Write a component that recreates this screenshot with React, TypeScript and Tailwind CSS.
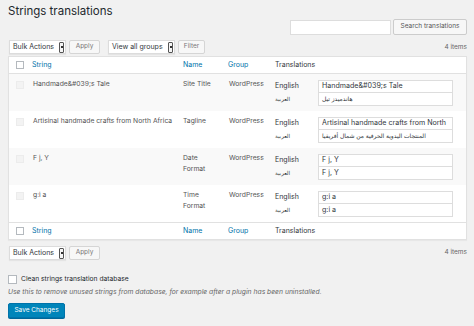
import React from "react";

const font = { fontFamily: 'Inter, "Noto Sans", "DejaVu Sans", sans-serif' };

function SelectBox({ label, width }: { label: string; width: string }) {
  return (
    <div className={`flex items-center h-[14px] bg-white border border-[#dcdcdc] ${width} pl-[3px] pr-[1px] text-[7px] text-[#32373c] shadow-[0_1px_1px_rgba(0,0,0,0.05)]`}>
      <span className="flex-1 whitespace-nowrap">{label}</span>
      <span className="w-[5px] h-[11px] border border-[#555] rounded-[1px] bg-[#f4f4f4] flex items-center justify-center">
        <span className="w-[2px] h-[2px] bg-[#333]" />
      </span>
    </div>
  );
}

function Btn({ label, width }: { label: string; width: string }) {
  return (
    <div className={`h-[14px] ${width} flex items-center justify-center bg-[#f7f7f7] border border-[#d5d5d5] rounded-[2px] text-[6.5px] text-[#777]`}>
      {label}
    </div>
  );
}

function Cb({ faint }: { faint?: boolean }) {
  return (
    <span
      className={`block w-[8px] h-[8px] ${faint ? "bg-[#f3f3f3] border border-[#ececec]" : "bg-white border border-[#b4b9be]"}`}
    />
  );
}

type Row = { s: string; name: string[]; en: string; ar: string; arRtl: boolean; bg: string };

const rows: Row[] = [
  { s: "Handmade&#039;s Tale", name: ["Site Title"], en: "Handmade&#039;s Tale", ar: "هاندميدز تيل", arRtl: true, bg: "bg-[#f9f9f9]" },
  { s: "Artisinal handmade crafts from North Africa", name: ["Tagline"], en: "Artisinal handmade crafts from North", ar: "المنتجات اليدوية الحرفية من شمال أفريقيا", arRtl: true, bg: "bg-white" },
  { s: "F j, Y", name: ["Date", "Format"], en: "F j, Y", ar: "F j, Y", arRtl: false, bg: "bg-[#f9f9f9]" },
  { s: "g:i a", name: ["Time", "Format"], en: "g:i a", ar: "g:i a", arRtl: false, bg: "bg-white" },
];

function HeaderRow({ top }: { top?: boolean }) {
  return (
    <div className={`flex h-[17px] items-center bg-white ${top ? "border-b" : "border-t"} border-[#e1e1e1] text-[7px]`}>
      <div className="w-[20px] flex justify-center pl-[1px]">
        <Cb />
      </div>
      <div className="w-[150px] pl-[3px] text-[#0073aa]">String</div>
      <div className="w-[46px] pl-[4px] text-[#0073aa]">Name</div>
      <div className="w-[46px] pl-[3px] text-[#0073aa]">Group</div>
      <div className="flex-1 pl-[4px] text-[#32373c]">Translations</div>
    </div>
  );
}

export default function App() {
  return (
    <div style={font} className="w-[474px] h-[326px] bg-[#f1f1f1] overflow-hidden text-[#555]">
      <div className="pl-[8px] pr-[7px]">
        <div className="h-[19px] pt-[3px] text-[11.5px] leading-[16px] text-[#23282d]">Strings translations</div>
        <div className="flex justify-end items-center gap-[2px] h-[16px]">
          <div className="w-[101px] h-[15px] bg-white border border-[#ddd]" />
          <div className="w-[74px] h-[16px] flex items-center justify-center bg-[#f7f7f7] border border-[#ccc] rounded-[2px] text-[6.5px] text-[#555]">
            Search translations
          </div>
        </div>
        <div className="flex items-center h-[18px] mt-[3px]">
          <div className="flex items-center gap-[3px] pl-[1px]">
            <SelectBox label="Bulk Actions" width="w-[57px]" />
            <Btn label="Apply" width="w-[31px]" />
          </div>
          <div className="flex items-center gap-[3px] ml-[8px]">
            <SelectBox label="View all groups" width="w-[67px]" />
            <Btn label="Filter" width="w-[27px]" />
          </div>
          <div className="flex-1 text-right text-[6.5px] text-[#666] self-start mt-[5px]">4 items</div>
        </div>

        <div className="border border-[#e1e1e1] bg-white shadow-[0_1px_1px_rgba(0,0,0,0.04)]">
          <HeaderRow top />
          {rows.map((r, i) => (
            <div key={i} className={`flex h-[37px] ${r.bg} text-[6.75px] leading-[10.5px] text-[#555]`}>
              <div className="w-[20px] flex justify-center pt-[7px] pl-[1px]">
                <Cb faint />
              </div>
              <div className="w-[150px] pl-[4px] pt-[5px] whitespace-nowrap text-[#555]">{r.s}</div>
              <div className="w-[46px] pl-[4px] pt-[5px]">
                {r.name.map((n, k) => (
                  <div key={k}>{n}</div>
                ))}
              </div>
              <div className="w-[46px] pl-[4px] pt-[5px]">WordPress</div>
              <div className="flex-1 pl-[4px] pt-[6px] pr-[13px]">
                <div className="grid grid-cols-[43px_1fr] grid-rows-[13px_13px]">
                  <div className="text-[#32373c] flex items-center text-[7px]">English</div>
                  <div className="h-[13px] border border-[#ddd] bg-white flex items-center px-[3px] text-[7.1px] text-[#32373c] whitespace-nowrap overflow-hidden">
                    {r.en}
                  </div>
                  <div className="text-[#32373c] flex items-center text-[5.5px]" dir="rtl" style={{ justifyContent: "flex-end" }}>
                    العربية
                  </div>
                  <div
                    dir={r.arRtl ? "rtl" : "ltr"}
                    className={`h-[13px] border border-[#ddd] border-t-0 bg-white flex items-center px-[3px] whitespace-nowrap overflow-hidden text-[#32373c] ${r.arRtl ? "text-[6px] justify-end" : "text-[7.1px]"}`}
                  >
                    {r.ar}
                  </div>
                </div>
              </div>
            </div>
          ))}
          <HeaderRow />
        </div>

        <div className="flex items-center h-[14px] mt-[6px]">
          <div className="flex items-center gap-[3px] pl-[1px]">
            <SelectBox label="Bulk Actions" width="w-[57px]" />
            <Btn label="Apply" width="w-[31px]" />
          </div>
          <div className="flex-1 text-right text-[6.5px] text-[#666]">4 items</div>
        </div>

        <div className="flex items-center gap-[4px] mt-[15px] h-[9px]">
          <span className="block w-[9px] h-[9px] bg-white border border-[#b4b9be]" />
          <span className="text-[6.7px] text-[#23282d]">Clean strings translation database</span>
        </div>
        <div className="mt-[3px] text-[6.75px] italic text-[#666] whitespace-nowrap">
          Use this to remove unused strings from database, for example after a plugin has been uninstalled.
        </div>
        <div className="mt-[6px] w-[57px] h-[15px] flex items-center justify-center bg-[#0085ba] border border-[#0073aa] rounded-[2px] text-[6.5px] text-white shadow-[0_1px_0_#006799]">
          Save Changes
        </div>
      </div>
    </div>
  );
}
